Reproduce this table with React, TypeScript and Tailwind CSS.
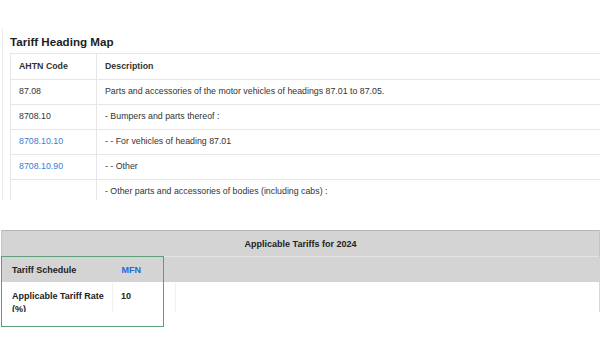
export default function App() {
  const rows = [
    { code: "87.08", desc: "Parts and accessories of the motor vehicles of headings 87.01 to 87.05.", link: false },
    { code: "8708.10", desc: "- Bumpers and parts thereof :", link: false },
    { code: "8708.10.10", desc: "- - For vehicles of heading 87.01", link: true },
    { code: "8708.10.90", desc: "- - Other", link: true },
    { code: "", desc: "- Other parts and accessories of bodies (including cabs) :", link: false },
  ];

  return (
    <div className="relative h-[338px] w-[600px] overflow-hidden bg-white pt-[28px] font-['Liberation_Sans',Arial,sans-serif] text-[#333]">
      <div className="ml-[2px] h-[172px] overflow-hidden border-l border-[#ececec] pl-[7px]">
        <h2 className="pt-[6px] text-[11.6px] font-bold leading-[15px] text-[#222]">Tariff Heading Map</h2>
        <table className="mt-[4px] w-[620px] border-collapse text-[8.8px]">
          <thead>
            <tr className="h-[26px]">
              <th className="w-[86px] border border-[#e6e6e6] pl-[8px] text-left font-bold">AHTN Code</th>
              <th className="border border-[#e6e6e6] pl-[8px] text-left font-bold">Description</th>
            </tr>
          </thead>
          <tbody>
            {rows.map((r, i) => (
              <tr key={i} className="h-[25px]">
                <td className={`border border-[#e6e6e6] pl-[8px] ${r.link ? "text-[#3b7dd0]" : ""}`}>{r.code}</td>
                <td className="border border-[#e6e6e6] pl-[8px]">{r.desc}</td>
              </tr>
            ))}
          </tbody>
        </table>
      </div>

      <div className="relative mt-[30px] ml-[1px] h-[82px] w-[599px] overflow-hidden">
        <table className="w-full border-collapse text-[9px] font-bold text-[#222]">
          <tbody>
            <tr className="h-[26px] border-t border-[#b5b5b5] bg-[#d4d4d4]">
              <td colSpan={3} className="border-l border-r border-[#c4c4c4] pt-[2px] text-center">Applicable Tariffs for 2024</td>
            </tr>
            <tr className="h-[25px] border-t border-[#e4e4e4] bg-[#d4d4d4]">
              <td className="w-[111px] border-l border-[#c4c4c4] pl-[10px] pt-[2px]">Tariff Schedule</td>
              <td className="pl-[9px] pt-[2px] text-[#1f68e6]" colSpan={2}>MFN</td>
            </tr>
            <tr className="align-top">
              <td className="w-[111px] border-l border-[#c4c4c4] pl-[10px] pt-[8px] leading-[13px]">
                Applicable Tariff Rate (%)
              </td>
              <td className="w-[63px] border-l border-r border-[#f0f0f0] pl-[8px] pt-[8px] leading-[13px]">10</td>
              <td className="border-r border-[#d8d8d8]"></td>
            </tr>
          </tbody>
        </table>
      </div>

      <div className="absolute left-[1px] top-[256px] h-[71px] w-[163px] border border-[#5e9e7a]"></div>
    </div>
  );
}
